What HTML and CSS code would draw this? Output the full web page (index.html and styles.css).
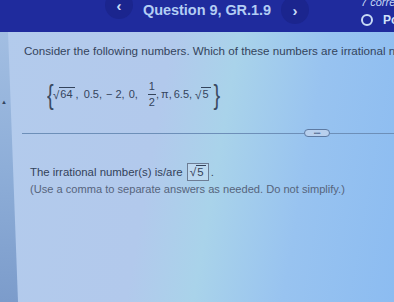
FILE: index.html
```html
<!DOCTYPE html>
<html>
<head>
<meta charset="utf-8">
<link rel="stylesheet" href="styles.css">
</head>
<body>
<div class="page">
  <header class="header">
    <div class="navbtn prev">&#8249;</div>
    <div class="title">Question 9, GR.1.9</div>
    <div class="navbtn next">&#8250;</div>
    <div class="status">
      <div class="correct">7 correct</div>
      <div class="points"><span class="ring"></span><span class="ptext">Points</span></div>
    </div>
  </header>
  <div class="body">
    <div class="strip"><span class="tri">&#9650;</span></div>
    <main class="content">
      <p class="prompt">Consider the following numbers. Which of these numbers are irrational numbers?</p>
      <div class="set">
        <span class="brace">{</span>
        <span class="rad"><span class="radsign">√</span><span class="radicand">64</span></span>
        <span class="comma">,</span>
        <span class="t">0.5,</span>
        <span class="t neg">− 2,</span>
        <span class="t zero">0,</span>
        <span class="frac"><span class="num">1</span><span class="den">2</span></span>
        <span class="comma after">,</span>
        <span class="t pi">π,</span>
        <span class="t six">6.5,</span>
        <span class="rad last"><span class="radsign">√</span><span class="radicand">5</span></span>
        <span class="brace close">}</span>
      </div>
      <div class="divider"><span class="line"></span><span class="pill">•••••</span><span class="line"></span></div>
      <p class="answer">The irrational number(s) is/are <span class="box"><span class="rad"><span class="radsign">√</span><span class="radicand">5</span></span></span>.</p>
      <p class="hint">(Use a comma to separate answers as needed. Do not simplify.)</p>
    </main>
  </div>
</div>
</body>
</html>
```
FILE: styles.css
```css
html, body {
  margin: 0;
  padding: 0;
}
body {
  width: 394px;
  height: 302px;
  overflow: hidden;
  font-family: "Liberation Sans", Arial, sans-serif;
  background: linear-gradient(100deg, #b3cbec 0%, #b2c9ec 40%, #a9d3ea 55%, #98c3f0 75%, #8cbcf1 100%);
}
.page {
  display: flex;
  flex-direction: column;
  height: 302px;
}
.header {
  height: 32px;
  flex: none;
  background: #1f2b9d;
  display: flex;
  align-items: flex-start;
  padding-left: 105px;
  overflow: hidden;
  color: #b3cdf4;
}
.navbtn {
  width: 28px;
  height: 28px;
  border-radius: 50%;
  background: #1b258e;
  display: flex;
  align-items: center;
  justify-content: center;
  font-size: 15px;
  font-weight: bold;
  color: #c8dcf8;
  flex: none;
}
.prev {
  margin-top: -9px;
}
.next {
  margin-top: -4px;
  margin-left: 10px;
}
.title {
  margin-left: 10px;
  margin-top: 2px;
  font-size: 14.5px;
  line-height: 16px;
  font-weight: bold;
  letter-spacing: -0.05px;
  white-space: nowrap;
}
.status {
  margin-left: 52px;
  display: flex;
  flex-direction: column;
  white-space: nowrap;
}
.correct {
  font-size: 11px;
  line-height: 11px;
  margin-top: -3px;
  font-style: italic;
  color: #c3d6f4;
}
.points {
  display: flex;
  align-items: center;
  margin-top: 5px;
  gap: 10px;
}
.ring {
  width: 8px;
  height: 8px;
  border: 2px solid #c8dbf6;
  border-radius: 50%;
}
.ptext {
  font-size: 12px;
  font-weight: bold;
  color: #d2e2f8;
}
.body {
  flex: 1;
  display: flex;
}
.strip {
  width: 18px;
  flex: none;
  background: linear-gradient(180deg, #a2bee2 0%, #8eaed8 50%, #7c9ccb 100%);
  clip-path: polygon(0 0, 8px 0, 18px 100%, 0 100%);
  display: flex;
  flex-direction: column;
  padding-top: 67px;
  box-sizing: border-box;
}
.tri {
  font-size: 6px;
  color: #33455f;
  margin-left: 1px;
}
.content {
  flex: 1;
  padding-left: 6px;
  padding-top: 12px;
  color: #33425a;
  min-width: 0;
  overflow: hidden;
}
.prompt {
  margin: 0;
  font-size: 11.6px;
  line-height: 13px;
  white-space: nowrap;
  color: #34445c;
}
.set {
  display: flex;
  align-items: center;
  margin-top: 21px;
  margin-left: 23px;
  font-size: 11px;
  color: #34445c;
  height: 32px;
  white-space: pre;
}
.brace {
  font-size: 20px;
  display: inline-block;
  transform: scaleY(1.4);
  color: #3a4a62;
  line-height: 20px;
  width: 6px;
}
.close {
  margin-left: 3px;
}
.rad {
  display: inline-flex;
  align-items: flex-end;
}
.rad.last {
  margin-left: 3px;
}
.radsign {
  font-size: 1.05em;
}
.radicand {
  border-top: 1px solid #34445c;
  padding: 0 2px 0 1px;
  line-height: 1.2;
}
.comma {
  margin-left: 1px;
}
.comma.after {
  margin-left: 0;
}
.t {
  margin-left: 5px;
  line-height: 1;
}
.t.neg {
  margin-left: 4px;
}
.t.zero {
  margin-left: 4px;
}
.t.pi {
  margin-left: 2px;
}
.t.six {
  margin-left: 2px;
}
.frac {
  display: inline-flex;
  flex-direction: column;
  align-items: center;
  margin-left: 10px;
  line-height: 1;
}
.num {
  border-bottom: 1px solid #34445c;
  padding: 0 1px 2px;
}
.den {
  padding-top: 2px;
}
.divider {
  display: flex;
  align-items: center;
  margin-top: 19px;
  margin-left: -2px;
}
.line {
  height: 1px;
  background: #6d8fb8;
  flex: 1;
}
.line:last-child {
  flex: none;
  width: 64px;
}
.pill {
  width: 24px;
  height: 6px;
  border: 1px solid #5d7aa2;
  border-radius: 4px;
  background: #b8d0ee;
  font-size: 5px;
  line-height: 6px;
  text-align: center;
  color: #51698f;
  letter-spacing: -0.5px;
  overflow: hidden;
}
.answer {
  margin: 26px 0 0 6px;
  font-size: 11.4px;
  line-height: 14px;
  color: #33425a;
  display: flex;
  align-items: center;
  white-space: pre;
}
.box {
  display: inline-flex;
  align-items: center;
  border: 1px solid #6c7c94;
  height: 18px;
  padding: 0 2px 0 2px;
  margin-left: 1px;
  margin-right: 2px;
  box-sizing: border-box;
  background: rgba(220, 232, 250, 0.35);
}
.box .radicand {
  border-top-color: #33425a;
}
.hint {
  margin: 1px 0 0 6px;
  font-size: 11.1px;
  line-height: 14px;
  color: #56647c;
  white-space: nowrap;
}
```
